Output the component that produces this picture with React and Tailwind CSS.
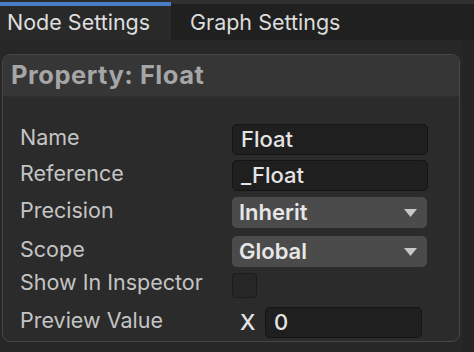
import React from "react";

function Label({ children }) {
  return (
    <div className="w-[229px] shrink-0 pl-[17px] pb-[4px] text-[21.5px] leading-none text-[#c4c4c4]">
      {children}
    </div>
  );
}

function TextField({ value, className = "" }) {
  return (
    <div
      className={`flex h-[31px] items-center rounded-[5px] border border-[#141414] bg-[#1f1f1f] pl-[8px] text-[22px] font-medium text-[#e4e4e4] ${className}`}
    >
      {value}
    </div>
  );
}

function Dropdown({ value }) {
  return (
    <div className="flex h-[31px] w-[195px] items-center justify-between rounded-[5px] bg-[#4b4b4b] pl-[7px] pr-[10px] text-[22px] font-semibold text-[#e6e6e6]">
      <span>{value}</span>
      <svg width="13" height="8" viewBox="0 0 13 8" aria-hidden="true">
        <path d="M0 0 H13 L6.5 8 Z" fill="#c8c8c8" />
      </svg>
    </div>
  );
}

export default function App() {
  return (
    <div
      className="flex h-[352px] w-[474px] flex-col overflow-hidden bg-[#272727]"
      style={{ fontFamily: "Inter, 'Noto Sans', sans-serif" }}
    >
      {/* tabs */}
      <div className="flex h-[40px] shrink-0">
        <div className="flex w-[171px] flex-col bg-[#292929]">
          <div className="h-[3px] bg-[#2c2c2c]" />
          <div className="h-[4px] bg-[#4a7ec4]" />
          <div className="flex flex-1 items-center pb-[2px] pl-[7px] text-[21.5px] text-[#dedede]">
            Node Settings
          </div>
        </div>
        <div className="flex flex-1 flex-col">
          <div className="h-[4px] bg-[#303030]" />
          <div className="flex flex-1 items-center bg-[#202020] pl-[19px] text-[21.5px] text-[#dcdcdc]">
            Graph Settings
          </div>
        </div>
      </div>

      <div className="flex flex-1">
        <div className="w-[463px] pt-[14px] pl-[2px]">
          {/* property box */}
          <div className="w-[458px] rounded-[8px] border border-[#474747] bg-[#2b2b2b]">
            <div className="flex h-[42px] items-center rounded-t-[7px] border-b border-[#2f2f2f] bg-[#363636] pl-[8px] text-[25.5px] font-bold tracking-[0.5px] text-[#a6a6a6]">
              Property: Float
            </div>
            <div className="flex flex-col pt-[27px] pb-[2px]">
              <div className="flex items-center">
                <Label>Name</Label>
                <TextField value="Float" className="w-[196px]" />
              </div>
              <div className="mt-[5px] flex items-center">
                <Label>Reference</Label>
                <TextField value="_Float" className="w-[196px]" />
              </div>
              <div className="mt-[6px] flex items-center">
                <Label>Precision</Label>
                <Dropdown value="Inherit" />
              </div>
              <div className="mt-[8px] flex items-center">
                <Label>Scope</Label>
                <Dropdown value="Global" />
              </div>
              <div className="mt-[5px] flex h-[26px] items-center">
                <Label>Show In Inspector</Label>
                <div className="h-[25px] w-[25px] rounded-[4px] border border-[#1c1c1c] bg-[#262626]" />
              </div>
              <div className="mt-[8px] flex items-center">
                <Label>Preview Value</Label>
                <div className="flex items-center">
                  <span className="w-[33px] pl-[8px] text-[22px] font-medium text-[#e4e4e4]">X</span>
                  <TextField value="0" className="w-[157px]" />
                </div>
              </div>
            </div>
          </div>
        </div>
        <div className="flex-1 bg-[#242424]" />
      </div>
    </div>
  );
}
